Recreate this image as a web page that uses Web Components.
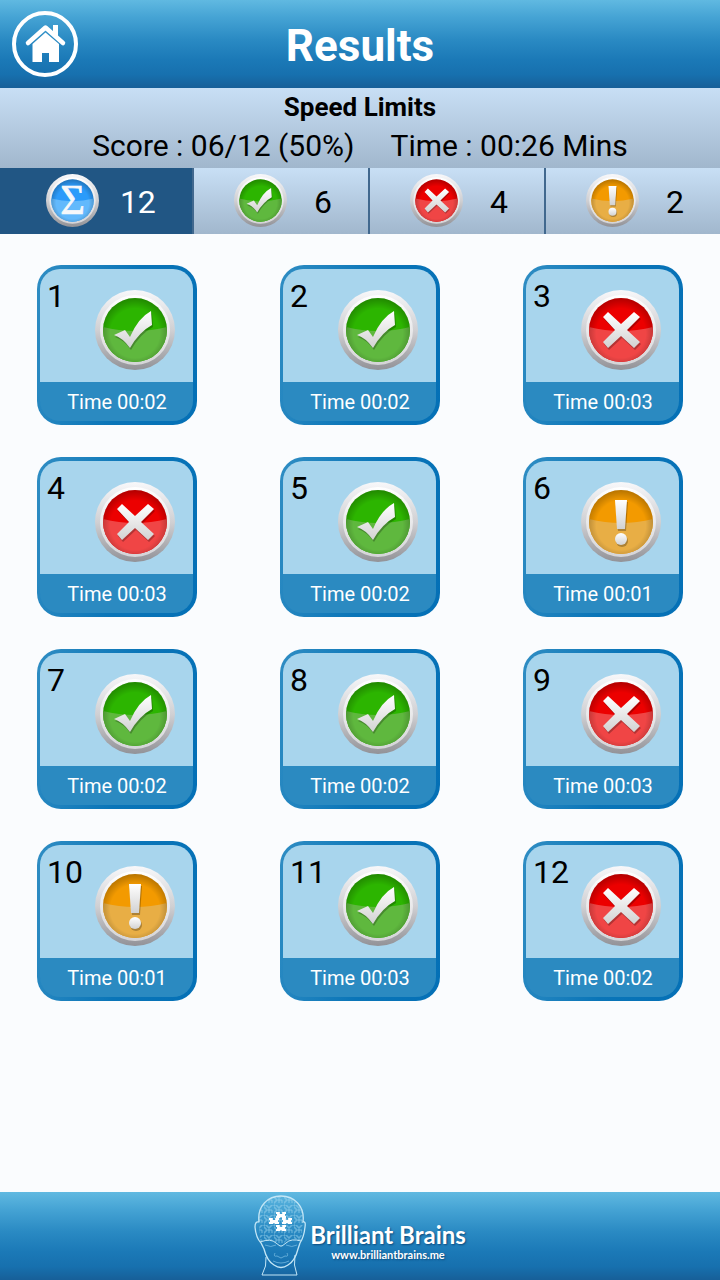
<!DOCTYPE html>
<html lang="en">
<head>
<meta charset="utf-8">
<meta name="viewport" content="width=device-width, initial-scale=1">
<title>Results</title>
<style>
  body {
    margin: 0;
    background: #fafcfe;
    font-family: Roboto, "Noto Sans", sans-serif;
    color: #000;
  }
</style>
</head>
<body>
<results-page></results-page>

<script>
const BAR_BACKGROUND = 'linear-gradient(#60b9e1 0%, #45a3d4 20%, #2a8ac3 45%, #1b79b7 68%, #1770ae 85%, #175f98 100%)';
const PANEL_BACKGROUND = 'linear-gradient(#c8dff5, #a1b7cd)';

class StatusIcon extends HTMLElement {
  constructor() {
    super();
    this.attachShadow({ mode: 'open' });
  }

  connectedCallback() {
    const kinds = {
      total: {
        top: '#2b9bfa', low: '#62b9fc', label: 'Total',
        mark: '<text x="40" y="61" text-anchor="middle" font-family="Liberation Serif, serif" font-size="64" fill="#f6f8fa" stroke="#f6f8fa" stroke-width="1">Σ</text>',
      },
      right: {
        top: '#2cb500', low: '#5fb83e', label: 'Right',
        mark: '<path d="M19 45L30 40L35 47Q43 28 56 21L57 35Q44 42 35 58Q28 48 19 45Z"/>',
      },
      wrong: {
        top: '#ec0000', low: '#f04545', label: 'Wrong',
        mark: '<path d="M22 27L27 22L40 34L53 22L59 27L46 40L59 52L53 58L40 46L27 58L22 52L34 40Z"/>',
      },
      skipped: {
        top: '#f39a00', low: '#e8ae45', label: 'Skipped',
        mark: '<path d="M34 18H46L44 47H36Z"/><circle cx="40" cy="57" r="6"/>',
      },
    };
    const { top, low, label, mark } = kinds[this.getAttribute('kind')];

    this.shadowRoot.innerHTML = `
    <style>
      :host { display: block; flex: none; width: 80px; height: 80px; }
      svg { display: block; width: 100%; height: 100%; }
    </style>
    <svg viewBox="0 0 80 80" role="img" aria-label="${label}">
      <defs>
        <linearGradient id="rim" x1="0" y1="0" x2="0" y2="1">
          <stop offset="0" stop-color="#f8f8fa"/>
          <stop offset=".5" stop-color="#d0d0d3"/>
          <stop offset="1" stop-color="#929297"/>
        </linearGradient>
        <linearGradient id="lip" x1="0" y1="0" x2="0" y2="1">
          <stop offset="0" stop-color="#fff"/>
          <stop offset="1" stop-color="#d4d4d7"/>
        </linearGradient>
        <radialGradient id="shade" cx=".5" cy=".55" r=".55">
          <stop offset=".7" stop-color="#000" stop-opacity="0"/>
          <stop offset="1" stop-color="#000" stop-opacity=".25"/>
        </radialGradient>
        <linearGradient id="mark" x1="0" y1="0" x2="0" y2="1">
          <stop offset="0" stop-color="#fff"/>
          <stop offset="1" stop-color="#d2d2d2"/>
        </linearGradient>
      </defs>
      <circle cx="40" cy="40" r="40" fill="url(#rim)"/>
      <circle cx="40" cy="40" r="35" fill="url(#lip)"/>
      <circle cx="40" cy="40" r="32" fill="${top}"/>
      <path d="M8 37Q40 45 72 37V40A32 32 0 0 1 8 40Z" fill="${low}"/>
      <circle cx="40" cy="40" r="32" fill="url(#shade)"/>
      ${label === 'Total' ? '' : `<g fill="#000" opacity=".25" transform="translate(1 2)">${mark}</g>`}
      <g fill="url(#mark)">${mark}</g>
    </svg>
    `;
  }
}

customElements.define('status-icon', StatusIcon);

class PageHeader extends HTMLElement {
  constructor() {
    super();
    this.attachShadow({ mode: 'open' }).innerHTML = `
    <style>
      :host {
        display: grid;
        grid-template-columns: 1fr auto 1fr;
        align-items: center;
        height: 88px;
        padding: 0 12px;
        background: ${BAR_BACKGROUND};
        color: #fff;
      }
      a { justify-self: start; color: inherit; }
      svg { display: block; width: 66px; height: 66px; }
      h1 { margin: 0; padding-top: 4px; font-size: 44px; line-height: 84px; font-weight: 700; }
    </style>
    <a href="#home" aria-label="Home">
      <svg viewBox="0 0 66 66">
        <circle cx="33" cy="33" r="31" fill="none" stroke="currentColor" stroke-width="4"/>
        <path d="M16 32L33.500 16.500L51 32" fill="none" stroke="currentColor" stroke-width="4.500" stroke-linecap="round" stroke-linejoin="round"/>
        <path d="M41 14H46V27L41 22Z" fill="currentColor"/>
        <path d="M20.500 33L33.500 21.500L47 33V51H37V42H30V51H20.500Z" fill="currentColor"/>
      </svg>
    </a>
    <h1><slot></slot></h1>
    `;
  }
}

customElements.define('page-header', PageHeader);

class QuizSummary extends HTMLElement {
  constructor() {
    super();
    this.attachShadow({ mode: 'open' }).innerHTML = `
    <style>
      :host {
        display: block;
        height: 80px;
        background: ${PANEL_BACKGROUND};
        text-align: center;
      }
      h2 { margin: 0; font-size: 26px; line-height: 38px; font-weight: 700; }
      div { display: flex; justify-content: center; gap: 36px; font-size: 30px; line-height: 40px; }
    </style>
    <h2><slot name="title"></slot></h2>
    <div>
      <slot name="score"></slot>
      <slot name="time"></slot>
    </div>
    `;
  }
}

customElements.define('quiz-summary', QuizSummary);

class FilterTab extends HTMLElement {
  constructor() {
    super();
    this.attachShadow({ mode: 'open' });
  }

  connectedCallback() {
    this.shadowRoot.innerHTML = `
    <style>
      :host { display: block; flex: 88 1 0; border-left: 2px solid #41688e; }
      :host([active]) { flex-grow: 97; border-left: 0; }
      button {
        display: flex;
        align-items: flex-start;
        justify-content: space-between;
        box-sizing: border-box;
        width: 100%;
        height: 66px;
        padding: 6px 36px 0 40px;
        border: 0;
        background: ${PANEL_BACKGROUND};
        font: 32px/56px Roboto, "Noto Sans", sans-serif;
        color: #000;
      }
      :host([active]) button { padding-left: 46px; background: #215684; color: #fff; }
      status-icon { width: 53px; height: 53px; }
    </style>
    <button type="button" aria-pressed="${this.hasAttribute('active')}">
      <status-icon kind="${this.getAttribute('kind')}"></status-icon>
      <slot></slot>
    </button>
    `;
  }
}

customElements.define('filter-tab', FilterTab);

class ResultCard extends HTMLElement {
  constructor() {
    super();
    this.attachShadow({ mode: 'open' });
  }

  connectedCallback() {
    this.shadowRoot.innerHTML = `
    <style>
      :host { display: block; width: 160px; }
      button {
        display: flex;
        flex-direction: column;
        box-sizing: border-box;
        width: 100%;
        height: 160px;
        padding: 4px 4px 4px 3px;
        border: 0;
        border-radius: 24px;
        background: linear-gradient(100deg, #2f8dc3 0%, #0a75b8 55%, #0470b6 100%);
        font-family: Roboto, "Noto Sans", sans-serif;
        color: #000;
        text-align: left;
      }
      .face {
        display: flex;
        justify-content: space-between;
        box-sizing: border-box;
        width: 100%;
        height: 113px;
        padding: 7px 18px 0 7px;
        border-radius: 20px 20px 0 0;
        background: #a8d5ed;
        font-size: 32px;
        line-height: 40px;
      }
      status-icon { margin-top: 14px; }
      .number { width: 0; }
      .time {
        box-sizing: border-box;
        width: 100%;
        height: 39px;
        padding: 1px 0 0 1px;
        border-radius: 0 0 20px 20px;
        background: #2b8ac1;
        color: #fff;
        font-size: 20px;
        line-height: 39px;
        text-align: center;
      }
    </style>
    <button type="button">
      <span class="face">
        <span class="number">${this.getAttribute('number')}</span>
        <status-icon kind="${this.getAttribute('kind')}"></status-icon>
      </span>
      <span class="time">Time ${this.getAttribute('time')}</span>
    </button>
    `;
  }
}

customElements.define('result-card', ResultCard);

class BrandFooter extends HTMLElement {
  constructor() {
    super();
    this.attachShadow({ mode: 'open' }).innerHTML = `
    <style>
      :host {
        display: flex;
        justify-content: center;
        align-items: center;
        gap: 4px;
        height: 88px;
        background: ${BAR_BACKGROUND};
        color: #fff;
        text-shadow: 1px 1px 2px #0d4a7c;
      }
      svg { display: block; width: 52px; height: 82px; }
      .brand { padding-top: 12px; }
      .name { font: 700 24px/26px Lato, sans-serif; }
      .link {
        display: block;
        font: 700 11px/14px Lato, sans-serif;
        color: inherit;
        text-align: center;
        text-decoration: none;
      }
    </style>
    <svg viewBox="0 0 52 82" fill="none" stroke="#c3e6f6" aria-hidden="true">
      <defs>
        <pattern id="jigsaw" width="10" height="10" patternUnits="userSpaceOnUse">
          <path d="M0 0H3V2H7V0H10M0 0V3H2V7H0V10M5 2V5H8V8M2 5H5V8" stroke="#a5d8ef" stroke-width=".8"/>
        </pattern>
      </defs>
      <path d="M5 27C4 12 14 1 27 1S50 12 49 27L47 46Q37 41 31 47L27 51L23 48Q15 42 6 47Z" fill="url(#jigsaw)" stroke="none" opacity=".75"/>
      <path d="M5 27C3 11 14 1 27 1S51 11 49 27Q52 26 51 32Q50 42 46 48L44 54Q41 66 34 70Q27 75 20 70Q13 66 10 54L7 48Q2 43 1 32Q1 26 5 27" stroke-width="1.300"/>
      <path d="M6 47Q17 43 22 48L26 51H28L32 48Q37 43 47 46M12 62Q13 71 8 80H43Q39 70 41 60"/>
      <path d="M11 50Q17 53 22 50M32 50Q38 53 43 50M21 58Q19 62 23 61L27 63L31 61Q35 62 33 58M19 66Q27 70 35 66" stroke="#73b9df" stroke-width=".8"/>
      <g fill="#fff" stroke="none">
        <path id="piece" d="M22 17H26Q25 19 27 19T28 17H32V19H31V21H32V23H28Q27 21 26 23H22V21H23V19H22Z"/>
        <use href="#piece" x="-7" y="6"/>
        <use href="#piece" x="6" y="6"/>
        <use href="#piece" y="13"/>
      </g>
    </svg>
    <div class="brand">
      <div class="name"><slot></slot></div>
      <a class="link" href="#site">www.brilliantbrains.me</a>
    </div>
    `;
  }
}

customElements.define('brand-footer', BrandFooter);

class ResultsPage extends HTMLElement {
  constructor() {
    super();
    this.attachShadow({ mode: 'open' });
  }

  connectedCallback() {
    const results = [
      ['right', '00:02'], ['right', '00:02'], ['wrong', '00:03'],
      ['wrong', '00:03'], ['right', '00:02'], ['skipped', '00:01'],
      ['right', '00:02'], ['right', '00:02'], ['wrong', '00:03'],
      ['skipped', '00:01'], ['right', '00:03'], ['wrong', '00:02'],
    ];

    this.shadowRoot.innerHTML = `
    <style>
      :host { display: flex; flex-direction: column; min-height: 100vh; }
      nav { display: flex; }
      main {
        display: grid;
        grid-template-columns: repeat(3, 160px);
        justify-content: space-between;
        align-content: start;
        gap: 32px 0;
        flex: 1;
        padding: 31px 37px;
      }
    </style>
    <page-header>Results</page-header>
    <quiz-summary>
      <span slot="title">Speed Limits</span>
      <span slot="score">Score : 06/12 (50%)</span>
      <span slot="time">Time : 00:26 Mins</span>
    </quiz-summary>
    <nav aria-label="Filter results">
      <filter-tab kind="total" active>12</filter-tab>
      <filter-tab kind="right">6</filter-tab>
      <filter-tab kind="wrong">4</filter-tab>
      <filter-tab kind="skipped">2</filter-tab>
    </nav>
    <main>
      ${results.map(([kind, time], i) => `<result-card number="${i + 1}" kind="${kind}" time="${time}"></result-card>`).join('')}
    </main>
    <brand-footer>Brilliant Brains</brand-footer>
    `;
  }
}

customElements.define('results-page', ResultsPage);
</script>
</body>
</html>
